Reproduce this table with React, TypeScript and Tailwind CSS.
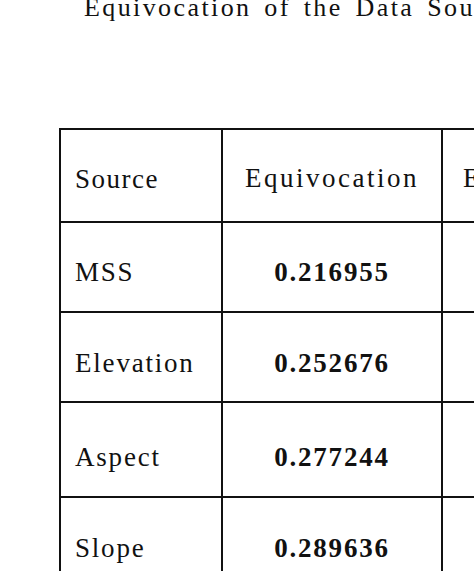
const ROWS = [
  { source: "MSS", value: "0.216955", h: "h-[90px]", pt: "pt-[36px]" },
  { source: "Elevation", value: "0.252676", h: "h-[90px]", pt: "pt-[37px]" },
  { source: "Aspect", value: "0.277244", h: "h-[95px]", pt: "pt-[41px]" },
  { source: "Slope", value: "0.289636", h: "h-[90px]", pt: "pt-[37px]" },
];

const serif = "font-['Liberation_Serif','Times_New_Roman',serif]";

export default function App() {
  return (
    <main className={`relative h-[571px] w-[474px] overflow-hidden bg-white text-[#111] ${serif}`}>
      <h1 className="-mt-[5px] pl-[84px] text-[26px] font-normal leading-[26px] tracking-[2.4px] [word-spacing:4px] whitespace-nowrap">
        Equivocation of the Data Sources
      </h1>

      <div className="ml-[59px] mt-[107px] w-[604px] border-l-2 border-t-2 border-[#111]">
        <div className="flex h-[93px] border-b-2 border-[#111] text-[27px] leading-[27px]">
          <div className="w-[162px] shrink-0 border-r-2 border-[#111] pl-[14px] pt-[36px] tracking-[1.5px]">
            Source
          </div>
          <div className="w-[220px] shrink-0 border-r-2 border-[#111] pt-[35px] text-center tracking-[2.5px]">
            Equivocation
          </div>
          <div className="w-[220px] shrink-0 border-r-2 border-[#111] pl-[20px] pt-[35px] whitespace-nowrap tracking-[2.5px]">
            Entropy
          </div>
        </div>

        {ROWS.map((r) => (
          <div key={r.source} className={`flex ${r.h} border-b-2 border-[#111] text-[27px] leading-[27px]`}>
            <div className={`w-[162px] shrink-0 border-r-2 border-[#111] pl-[14px] ${r.pt} tracking-[1.8px]`}>
              {r.source}
            </div>
            <div className={`w-[220px] shrink-0 border-r-2 border-[#111] ${r.pt} text-center font-bold tracking-[1.8px]`}>
              {r.value}
            </div>
            <div className="w-[220px] shrink-0 border-r-2 border-[#111]" />
          </div>
        ))}
      </div>
    </main>
  );
}
